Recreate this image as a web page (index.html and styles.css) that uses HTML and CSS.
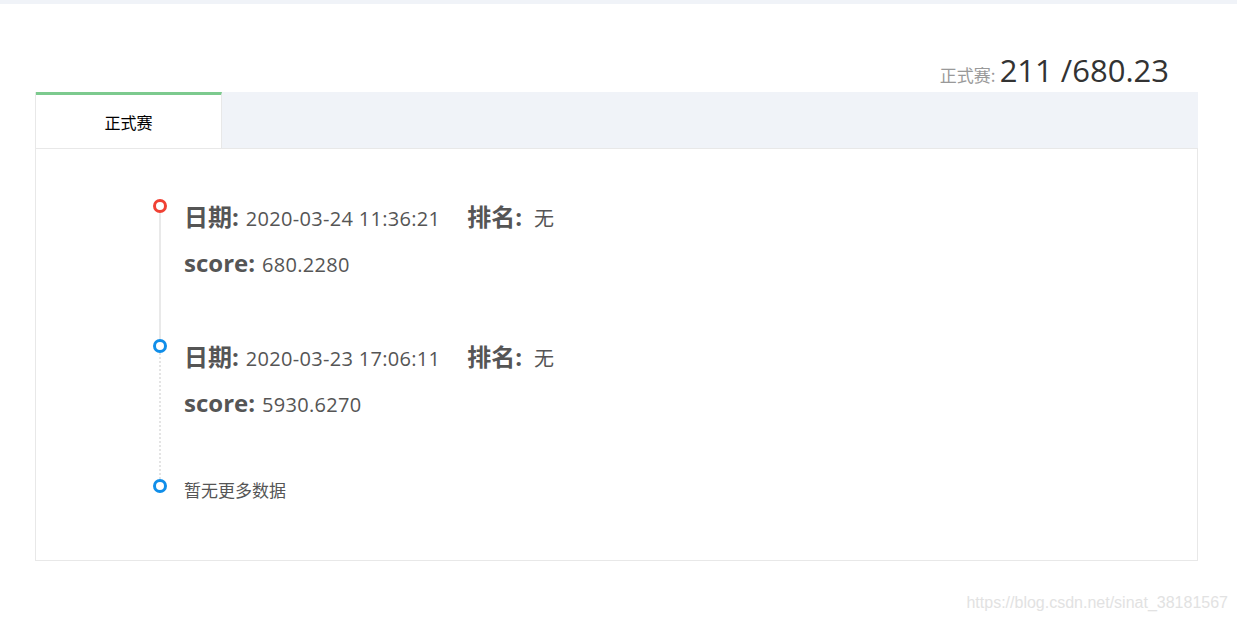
FILE: index.html
```html
<!DOCTYPE html>
<html lang="zh-CN">
<head>
    <meta charset="UTF-8">
    <meta name="viewport" content="width=device-width, initial-scale=1.0">
    <title>成绩记录</title>
    <link rel="stylesheet" href="styles.css">
</head>
<body>

    <div class="topbar"></div>

    <div class="page">
        <div class="summary">
            <span class="summary-label">正式赛:</span>
            <span class="summary-score">211 /680.23</span>
        </div>

        <div class="tabs">
            <div class="tab tab-active">正式赛</div>
        </div>

        <div class="panel">
            <div class="timeline">
                <div class="tl-item">
                    <div class="tl-mark">
                        <span class="tl-dot tl-dot-red"></span>
                        <span class="tl-line"></span>
                    </div>
                    <div class="tl-body">
                        <p class="tl-row"><b>日期:</b><span class="tl-value">2020-03-24 11:36:21</span><b class="tl-rank">排名:</b><span class="tl-value tl-value-rank">无</span></p>
                        <p class="tl-row tl-row-score"><b>score:</b><span class="tl-value">680.2280</span></p>
                    </div>
                </div>

                <div class="tl-item">
                    <div class="tl-mark">
                        <span class="tl-dot"></span>
                        <span class="tl-line tl-line-dotted"></span>
                    </div>
                    <div class="tl-body">
                        <p class="tl-row"><b>日期:</b><span class="tl-value">2020-03-23 17:06:11</span><b class="tl-rank">排名:</b><span class="tl-value tl-value-rank">无</span></p>
                        <p class="tl-row tl-row-score"><b>score:</b><span class="tl-value">5930.6270</span></p>
                    </div>
                </div>

                <div class="tl-item tl-item-last">
                    <div class="tl-mark">
                        <span class="tl-dot"></span>
                    </div>
                    <div class="tl-body">
                        <p class="tl-empty">暂无更多数据</p>
                    </div>
                </div>
            </div>
        </div>

        <div class="watermark">https://blog.csdn.net/sinat_38181567</div>
    </div>

</body>
</html>
```

FILE: styles.css
```css
body {
    margin: 0;
    font-family: "Open Sans", "Noto Sans CJK SC", sans-serif;
    color: #555;
    background-color: #fff;
}

.topbar {
    height: 4px;
    background-color: #f0f3f8;
}

.page {
    padding: 0 39px 0 35px;
}

/* score summary on the right */
.summary {
    height: 42px;
    margin-top: 46px;
    padding-right: 29px;
    text-align: right;
    line-height: 40px;
}

.summary-label {
    font-size: 17px;
    color: #999;
    font-family: "Noto Sans CJK SC", sans-serif;
}

.summary-score {
    font-size: 31px;
    color: #333;
}

/* tabs */
.tabs {
    display: flex;
    height: 56px;
    background-color: #f0f3f8;
    border-left: 1px solid #e8e8e8;
}

.tab {
    width: 186px;
    box-sizing: border-box;
    display: flex;
    align-items: center;
    justify-content: center;
    font-size: 16px;
    color: #000;
    font-family: "Noto Sans CJK SC", sans-serif;
}

.tab-active {
    background-color: #fff;
    border-top: 3px solid #7cca8e;
    border-right: 1px solid #e8e8e8;
}

.panel {
    border: 1px solid #e8e8e8;
    height: 413px;
    padding: 50px 0 0 117px;
    box-sizing: border-box;
}

/* timeline */
.tl-item {
    display: grid;
    grid-template-columns: 14px 1fr;
    column-gap: 17px;
    height: 140px;
}

.tl-item-last {
    height: auto;
}

.tl-mark {
    display: flex;
    flex-direction: column;
    align-items: center;
}

.tl-dot {
    width: 14px;
    height: 14px;
    box-sizing: border-box;
    border: 3px solid #108ee9;
    border-radius: 50%;
    flex-shrink: 0;
}

.tl-dot-red {
    border-color: #f04134;
}

.tl-line {
    flex: 1;
    width: 0;
    border-left: 2px solid #e9e9e9;
}

.tl-line-dotted {
    border-left: 2px dotted #e4e4e4;
}

.tl-row {
    margin: 0;
    line-height: 36px;
    font-size: 20px;
    white-space: nowrap;
}

.tl-row b {
    font-size: 24px;
    color: #555;
}

.tl-row-score {
    margin-top: 8px;
}

.tl-rank {
    margin-left: 27px;
}

.tl-value {
    margin-left: 7px;
    letter-spacing: 0.3px;
    color: #555;
}

.tl-value-rank {
    margin-left: 12px;
}

.tl-empty {
    margin: 0;
    line-height: 22px;
    font-size: 17px;
    color: #555;
    font-family: "Noto Sans CJK SC", sans-serif;
}

.watermark {
    margin-top: 33px;
    margin-right: -30px;
    text-align: right;
    font-family: "Liberation Sans", sans-serif;
    font-size: 16px;
    color: #e2e2e2;
}
```
